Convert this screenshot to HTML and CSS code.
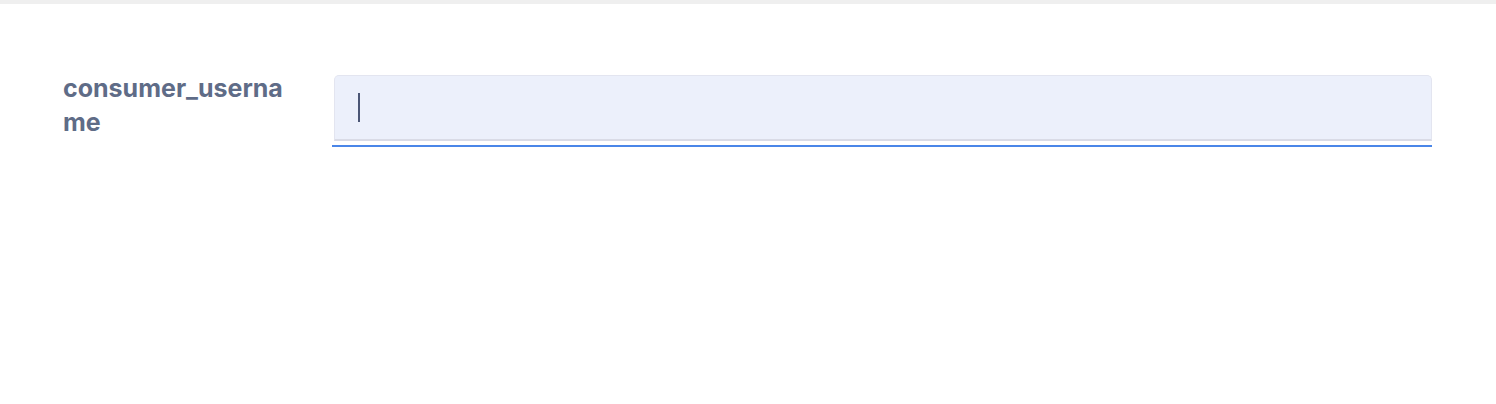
FILE: index.html
```html
<!DOCTYPE html>
<html>
<head>
<meta charset="utf-8">
<link rel="stylesheet" href="styles.css">
</head>
<body>
<div class="topbar"></div>
<div class="form">
  <div class="row">
    <label class="label" for="cu">consumer_username</label>
    <div class="field">
      <div class="input" id="cu"><span class="caret"></span></div>
    </div>
  </div>
</div>
</body>
</html>
```
FILE: styles.css
```css
html, body {
  margin: 0;
  padding: 0;
  background: #ffffff;
}
body {
  font-family: Inter, "Noto Sans", sans-serif;
}
.topbar {
  height: 4px;
  background: #efefef;
}
.form {
  padding: 65px 64px 0 63px;
}
.row {
  display: flex;
  align-items: flex-start;
}
.label {
  width: 228px;
  flex: none;
  margin-top: 2px;
  margin-right: 41px;
  font-size: 25px;
  font-weight: 700;
  line-height: 34px;
  color: #5f6c87;
  word-break: break-all;
}
.field {
  flex: 1;
  margin-top: 6px;
  padding-bottom: 4px;
  border-bottom: 2px solid #4a86e8;
}
.input {
  margin-left: 2px;
  height: 63px;
  background: #ecf0fb;
  border: 1px solid #e3e5f0;
  border-bottom: 2px solid #d9dbe6;
  border-radius: 5px 5px 0 0;
  display: flex;
  align-items: center;
  padding-left: 23px;
}
.caret {
  display: block;
  width: 2px;
  height: 29px;
  background: #4b5675;
}
```
